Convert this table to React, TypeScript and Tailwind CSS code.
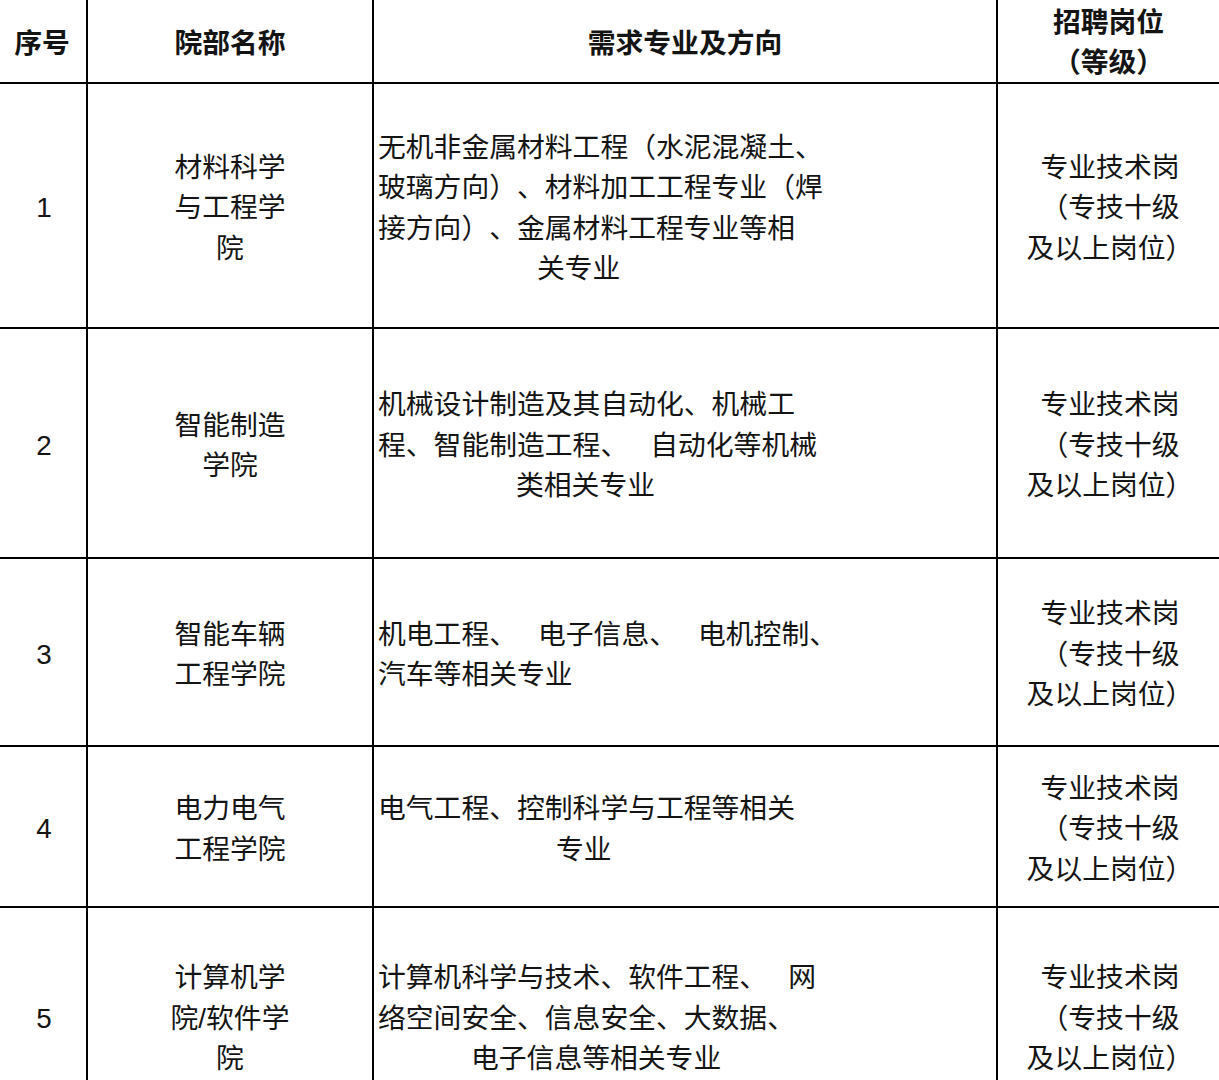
import React from "react";

const gap = (w: string) => <span className={`inline-block ${w}`} />;

const rows: {
  h: string;
  n: string;
  name: string[];
  desc: { t: React.ReactNode; cls?: string }[];
}[] = [
  {
    h: "h-[245px]",
    n: "1",
    name: ["材料科学", "与工程学", "院"],
    desc: [
      { t: "无机非金属材料工程（水泥混凝土、" },
      { t: "玻璃方向）、材料加工工程专业（焊" },
      { t: "接方向）、金属材料工程专业等相" },
      { t: "关专业", cls: "pl-[159px]" },
    ],
  },
  {
    h: "h-[230px]",
    n: "2",
    name: ["智能制造", "学院"],
    desc: [
      { t: "机械设计制造及其自动化、机械工" },
      {
        t: (
          <>
            程、智能制造工程、{gap("w-[22px]")}自动化等机械
          </>
        ),
      },
      { t: "类相关专业", cls: "pl-[138px]" },
    ],
  },
  {
    h: "h-[188px]",
    n: "3",
    name: ["智能车辆", "工程学院"],
    desc: [
      {
        t: (
          <>
            机电工程、{gap("w-[21px]")}电子信息、{gap("w-[21px]")}电机控制、
          </>
        ),
      },
      { t: "汽车等相关专业" },
    ],
  },
  {
    h: "h-[161px]",
    n: "4",
    name: ["电力电气", "工程学院"],
    desc: [
      { t: "电气工程、控制科学与工程等相关" },
      { t: "专业", cls: "pl-[178px]" },
    ],
  },
  {
    h: "h-[218px]",
    n: "5",
    name: ["计算机学", "院/软件学", "院"],
    desc: [
      {
        t: (
          <>
            计算机科学与技术、软件工程、{gap("w-[21px]")}网
          </>
        ),
      },
      { t: "络空间安全、信息安全、大数据、" },
      { t: "电子信息等相关专业", cls: "pl-[93px]" },
    ],
  },
];

export default function App() {
  return (
    <div
      className="w-[1219px] h-[1080px] overflow-hidden bg-white text-[#141414] text-[27.8px] leading-[40.5px] [text-spacing-trim:space-all]"
      style={{ fontFamily: '"Liberation Sans", "Noto Sans CJK SC", sans-serif' }}
    >
      <div className="grid grid-cols-[88px_286px_624px_221px]">
        {/* header */}
        <div className="h-[84px] border-r-2 border-b-2 border-black flex items-center justify-center font-bold pt-[6px]">
          <span className="-ml-[2px]">序号</span>
        </div>
        <div className="h-[84px] border-r-2 border-b-2 border-black flex items-center justify-center font-bold pt-[6px]">
          院部名称
        </div>
        <div className="h-[84px] border-r-2 border-b-2 border-black flex items-center justify-center font-bold pt-[6px]">
          需求专业及方向
        </div>
        <div className="h-[84px] border-b-2 border-black flex flex-col items-center justify-center font-bold leading-[40px] pt-[4px]">
          <div>招聘岗位</div>
          <div>（等级）</div>
        </div>

        {rows.map((r) => (
          <React.Fragment key={r.n}>
            <div className={`${r.h} border-r-2 border-b-2 border-black flex items-center justify-center pt-[6px] pl-[2px]`}>
              {r.n}
            </div>
            <div className={`${r.h} border-r-2 border-b-2 border-black flex flex-col items-center justify-center pt-[6px]`}>
              {r.name.map((l, i) => (
                <div key={i}>{l}</div>
              ))}
            </div>
            <div className={`${r.h} border-r-2 border-b-2 border-black flex flex-col justify-center pl-[4px] pt-[6px]`}>
              {r.desc.map((l, i) => (
                <div key={i} className={`whitespace-nowrap ${l.cls ?? ""}`}>
                  {l.t}
                </div>
              ))}
            </div>
            <div className={`${r.h} border-b-2 border-black flex flex-col items-center justify-center pt-[6px] pl-[3px]`}>
              <div>专业技术岗</div>
              <div>（专技十级</div>
              <div>及以上岗位）</div>
            </div>
          </React.Fragment>
        ))}
      </div>
    </div>
  );
}
